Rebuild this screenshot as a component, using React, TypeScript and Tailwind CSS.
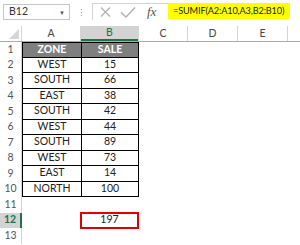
import React from "react";

const rows: [string, number][] = [
  ["WEST", 15],
  ["SOUTH", 66],
  ["EAST", 38],
  ["SOUTH", 42],
  ["WEST", 44],
  ["SOUTH", 89],
  ["WEST", 73],
  ["EAST", 14],
  ["NORTH", 100],
];

const font = { fontFamily: 'Lato, "Liberation Sans", Arial, sans-serif' };

const RowHead = ({ n, active }: { n: number; active?: boolean }) =>
  active ? (
    <div className="w-[22px] shrink-0 h-full flex items-center justify-center bg-[#d3d3d3] border-r-2 border-[#217346] text-[#217346] font-bold text-[10.5px]">
      {n}
    </div>
  ) : (
    <div className="w-[22px] shrink-0 h-full flex items-center justify-center border-r border-[#d4d4d4] text-[#555] text-[10.5px]">
      {n}
    </div>
  );

const App = () => {
  return (
    <div
      className="w-[300px] h-[245px] bg-white overflow-hidden text-[#222]"
      style={font}
    >
      {/* formula bar */}
      <div className="h-[26px] flex items-start pt-[3px]">
        <div className="ml-[3px] mt-[1px] w-[67px] h-[16px] border border-[#c6c6c6] flex items-center justify-between pl-[5px] pr-[4px] text-[10.5px] text-[#333]">
          <span>B12</span>
          <span className="text-[6px] text-[#555]">▼</span>
        </div>
        <div className="w-[22px] h-[18px] flex flex-col items-center justify-center gap-[2px]">
          <span className="w-[1px] h-[1px] bg-[#999]" />
          <span className="w-[1px] h-[1px] bg-[#999]" />
          <span className="w-[1px] h-[1px] bg-[#999]" />
        </div>
        <div className="h-[17px] flex items-center border-l border-t border-[#d4d4d4] w-[76px]">
          <svg width="22" height="17" viewBox="0 0 22 17" className="ml-[2px]">
            <path d="M6 3.5 L15 12.5 M15 3.5 L6 12.5" stroke="#b0b0b0" strokeWidth="1.2" fill="none" />
          </svg>
          <svg width="22" height="17" viewBox="0 0 22 17">
            <path d="M4 8.5 L9 13 L18 3.5" stroke="#b0b0b0" strokeWidth="1.4" fill="none" />
          </svg>
          <span
            className="ml-[8px] text-[13px] italic text-[#555]"
            style={{ fontFamily: '"Liberation Serif", "Times New Roman", serif' }}
          >
            fx
          </span>
        </div>
        <div className="w-[122px] h-[16px] bg-[#ffff00] flex items-center pl-[5px] text-[9.2px] tracking-[-0.15px] text-[#222]">
          =SUMIF(A2:A10,A3,B2:B10)
        </div>
      </div>

      {/* column headers */}
      <div className="h-[16px] flex text-[10.5px] text-[#444] border-b border-[#ababab]">
        <div className="w-[22px] shrink-0 h-full border-r border-[#d4d4d4] relative">
          <svg width="10" height="10" className="absolute right-[2px] bottom-[2px]">
            <path d="M10 0 L10 10 L0 10 Z" fill="#d6d6d6" />
          </svg>
        </div>
        <div className="w-[59px] shrink-0 h-full border-r border-[#d4d4d4] flex items-center justify-center">A</div>
        <div className="w-[57px] shrink-0 h-full bg-[#d3d3d3] border-b-2 border-[#217346] text-[#217346] flex items-center justify-center">
          B
        </div>
        <div className="w-[50px] shrink-0 h-full border-r border-l border-[#d4d4d4] flex items-center justify-center">C</div>
        <div className="w-[50px] shrink-0 h-full border-r border-[#d4d4d4] flex items-center justify-center">D</div>
        <div className="w-[50px] shrink-0 h-full border-r border-[#d4d4d4] flex items-center justify-center">E</div>
        <div className="flex-1" />
      </div>

      {/* row 1 */}
      <div className="h-[15.5px] flex">
        <RowHead n={1} />
        <div className="w-[60px] shrink-0 h-full bg-[#7f7f7f] border border-black text-white font-bold text-[10.5px] flex items-center justify-center">
          ZONE
        </div>
        <div className="w-[57px] shrink-0 h-full bg-[#7f7f7f] border-y border-r border-black text-white font-bold text-[10.5px] flex items-center justify-center">
          SALE
        </div>
      </div>

      {rows.map(([zone, sale], i) => (
        <div key={i} className="h-[15.5px] flex">
          <RowHead n={i + 2} />
          <div className="w-[60px] shrink-0 h-full border-x border-b border-black text-[10.5px] flex items-center justify-center">
            {zone}
          </div>
          <div className="w-[57px] shrink-0 h-full border-r border-b border-black text-[10.5px] flex items-center justify-center">
            {sale}
          </div>
        </div>
      ))}

      <div className="h-[15.5px] flex">
        <RowHead n={11} />
      </div>
      <div className="h-[15.5px] flex">
        <RowHead n={12} active />
        <div className="w-[58px] shrink-0" />
        <div className="w-[59px] shrink-0 h-[17px] -mt-[1px] border-2 border-[#e00000] text-[10.5px] flex items-center justify-center">
          197
        </div>
      </div>
      <div className="h-[15.5px] flex">
        <RowHead n={13} />
      </div>
    </div>
  );
};

export default App;
